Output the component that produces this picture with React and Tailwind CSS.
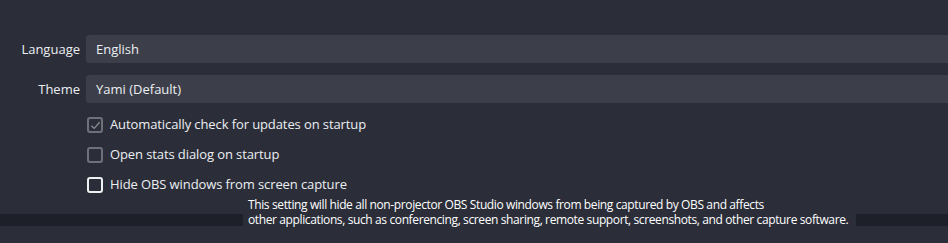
import { useState } from "react";

const checks = [
  ["Automatically check for updates on startup", true, false],
  ["Open stats dialog on startup", false, false],
  ["Hide OBS windows from screen capture", false, true],
];

function CheckBox({ checked, hover }) {
  return (
    <span
      className={`flex h-[16px] w-[16px] items-center justify-center rounded-[3px] border-2 ${
        hover ? "border-[#f0f0f2]" : "border-[#6e717a]"
      }`}
    >
      {checked && (
        <svg viewBox="0 0 12 12" className="h-[11px] w-[11px]">
          <path d="M1.5 6.2 L4.6 9.2 L10.5 2.5" fill="none" stroke="#8a8d95" strokeWidth="1.4" />
        </svg>
      )}
    </span>
  );
}

export default function App() {
  const [lang] = useState("English");

  return (
    <div className="relative h-[243px] w-[948px] overflow-hidden bg-[#2b2e39] font-['Open_Sans',sans-serif] text-[13px] text-[#eceef2]">
      <div className="pt-[35px]">
        <div className="grid grid-cols-[80px_1fr] gap-x-[6px] gap-y-[12px]">
          <span className="flex h-[28px] items-center justify-end pt-[1px]">Language</span>
          <div className="flex h-[28px] items-center rounded-l-[3px] bg-[#3c3f4a] pl-[10px] pt-[1px]">{lang}</div>
          <span className="flex h-[28px] items-center justify-end pt-[1px]">Theme</span>
          <div className="flex h-[28px] items-center rounded-l-[3px] bg-[#3c3f4a] pl-[10px] pt-[1px]">Yami (Default)</div>
        </div>

        <div className="mt-[14px] flex flex-col gap-[14px] pl-[87px] tracking-[-0.1px]">
          {checks.map(([label, checked, hover]) => (
            <label key={label} className="flex h-[16px] items-center gap-[7px]">
              <CheckBox checked={checked} hover={hover} />
              <span>{label}</span>
            </label>
          ))}
        </div>
      </div>

      <div className="mt-[21px] h-[12px] bg-[#1e2029]" />

      <div className="absolute left-[243px] top-[196px] w-[613px] bg-[#2b2e39] px-[5px] pt-[1px] pb-[2px] font-['Open_Sans',sans-serif] text-[12px] leading-[15px] tracking-[-0.38px] text-white">
        <p className="whitespace-nowrap">This setting will hide all non-projector OBS Studio windows from being captured by OBS and affects</p>
        <p className="whitespace-nowrap">other applications, such as conferencing, screen sharing, remote support, screenshots, and other capture software.</p>
      </div>
    </div>
  );
}
